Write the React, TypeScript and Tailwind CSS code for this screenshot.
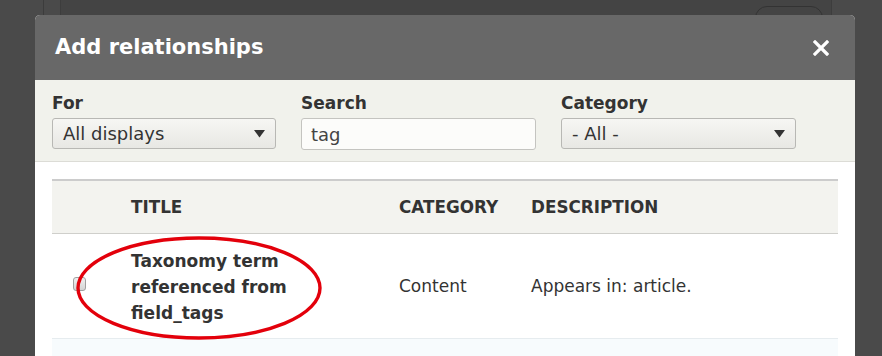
import React from "react"

const font = { fontFamily: '"DejaVu Sans", "Liberation Sans", sans-serif' }

function SelectBox({ value, width }: { value: string; width: string }) {
  return (
    <div
      className={`flex h-[31px] ${width} items-center justify-between rounded-[3px] border border-[#b8b8b4] bg-gradient-to-b from-[#f6f6f3] to-[#e8e8e4] pl-[10px] pr-[10px] text-[18px] text-[#333]`}
    >
      <span>{value}</span>
      <svg width="11" height="8" viewBox="0 0 11 8">
        <path d="M0 0 H11 L5.5 7.5 Z" fill="#333" />
      </svg>
    </div>
  )
}

export default function App() {
  return (
    <div className="relative h-[356px] w-[882px] overflow-hidden bg-[#4a4a4a]" style={font}>
      {/* page behind the overlay */}
      <div className="absolute left-[43px] top-0 h-full w-px bg-[#3c3c3c]" />
      <div className="absolute left-[60px] top-0 h-full w-[772px] border-l border-r border-[#3d3d3d] bg-[#444444]" />
      <div className="absolute left-[755px] top-[6px] h-[24px] w-[68px] rounded-full border border-[#333]" />

      {/* dialog */}
      <div className="absolute left-[35px] top-[15px] w-[820px] overflow-hidden rounded-t-[5px] bg-white">
        <div className="flex h-[65px] items-center justify-between bg-[#686868] pl-[20px] pr-[26px]">
          <h1 className="text-[21px] font-bold text-white">Add relationships</h1>
          <svg width="16" height="16" viewBox="0 0 16 16">
            <path d="M2 2 L14 14 M14 2 L2 14" stroke="#fff" strokeWidth="3.2" strokeLinecap="square" />
          </svg>
        </div>

        <div className="flex h-[82px] gap-[25px] border-b border-[#dcdcd6] bg-[#f1f2ec] pl-[17px] pt-[13px]">
          <div className="flex flex-col gap-[4px]">
            <label className="text-[17px] font-bold leading-[21px] text-[#333]">For</label>
            <SelectBox value="All displays" width="w-[224px]" />
          </div>
          <div className="flex flex-col gap-[4px]">
            <label className="text-[17px] font-bold leading-[21px] text-[#333]">Search</label>
            <div className="flex h-[32px] w-[235px] items-center rounded-[3px] border border-[#c4c4c0] bg-[#fcfcfa] pl-[9px] text-[18px] text-[#444]">
              tag
            </div>
          </div>
          <div className="flex flex-col gap-[4px]">
            <label className="text-[17px] font-bold leading-[21px] text-[#333]">Category</label>
            <SelectBox value="- All -" width="w-[235px]" />
          </div>
        </div>

        <div className="px-[17px] pt-[17px]">
          <div className="relative border-t-2 border-[#cccccc]">
            <div className="flex h-[53px] items-center border-b border-[#cfcfcb] bg-[#f3f3ef] pt-[2px] text-[16.8px] font-bold text-[#333]">
              <div className="w-[79px]" />
              <div className="w-[268px]">TITLE</div>
              <div className="w-[132px]">CATEGORY</div>
              <div>DESCRIPTION</div>
            </div>
            <div className="flex h-[105px] items-center border-b border-[#e6ecef] bg-white pt-[2px] text-[17px] text-[#333]">
              <div className="mb-[6px] flex w-[79px] pl-[21px]">
                <div className="h-[14px] w-[13px] rounded-[3px] border border-[#a0a0a0] bg-gradient-to-b from-[#f0f0f0] to-[#d4d4d4]" />
              </div>
              <div className="w-[268px] font-bold leading-[26px]">
                Taxonomy term
                <br />
                referenced from
                <br />
                field_tags
              </div>
              <div className="w-[132px]">Content</div>
              <div>Appears in: article.</div>
            </div>
            <div className="h-[20px] bg-[#f7fbfd]" />
            <svg className="absolute left-[24px] top-[54px]" width="248" height="110" viewBox="0 0 248 110">
              <ellipse cx="123" cy="53" rx="121" ry="50" fill="none" stroke="#e3000b" strokeWidth="3.4" />
            </svg>
          </div>
        </div>
      </div>
    </div>
  )
}
